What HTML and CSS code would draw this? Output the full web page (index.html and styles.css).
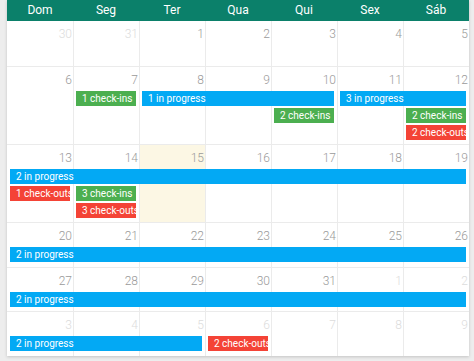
FILE: index.html
```html
<!DOCTYPE html>
<html lang="pt">
<head>
<meta charset="utf-8">
<title>Calendário</title>
<link rel="stylesheet" href="styles.css">
</head>
<body>
<div class="cal">
  <div class="head">
    <div>Dom</div><div>Seg</div><div>Ter</div><div>Qua</div><div>Qui</div><div>Sex</div><div>Sáb</div>
  </div>

  <div class="week first ev0">
    <div class="day other">30</div><div class="day other">31</div><div class="day">1</div><div class="day">2</div><div class="day">3</div><div class="day">4</div><div class="day">5</div>
  </div>

  <div class="week ev3">
    <div class="day">6</div><div class="day">7</div><div class="day">8</div><div class="day">9</div><div class="day">10</div><div class="day">11</div><div class="day">12</div>
    <div class="ev green r2 c2">1 check-ins</div>
    <div class="ev blue r2 c3 s3">1 in progress</div>
    <div class="ev blue r2 c6 s2">3 in progress</div>
    <div class="ev green r3 c5">2 check-ins</div>
    <div class="ev green r3 c7">2 check-ins</div>
    <div class="ev red r4 c7">2 check-outs</div>
  </div>

  <div class="week ev3">
    <div class="day">13</div><div class="day">14</div><div class="day today">15</div><div class="day">16</div><div class="day">17</div><div class="day">18</div><div class="day">19</div>
    <div class="ev blue r2 c1 s7">2 in progress</div>
    <div class="ev red r3 c1">1 check-outs</div>
    <div class="ev green r3 c2">3 check-ins</div>
    <div class="ev red r4 c2">3 check-outs</div>
  </div>

  <div class="week ev1">
    <div class="day">20</div><div class="day">21</div><div class="day">22</div><div class="day">23</div><div class="day">24</div><div class="day">25</div><div class="day">26</div>
    <div class="ev blue r2 c1 s7">2 in progress</div>
  </div>

  <div class="week ev1 short">
    <div class="day">27</div><div class="day">28</div><div class="day">29</div><div class="day">30</div><div class="day">31</div><div class="day other">1</div><div class="day other">2</div>
    <div class="ev blue r2 c1 s7">2 in progress</div>
  </div>

  <div class="week ev1">
    <div class="day other">3</div><div class="day other">4</div><div class="day other">5</div><div class="day other">6</div><div class="day other">7</div><div class="day other">8</div><div class="day other">9</div>
    <div class="ev blue r2 c1 s3">2 in progress</div>
    <div class="ev red r2 c4">2 check-outs</div>
  </div>
</div>
</body>
</html>
```
FILE: styles.css
```css
html, body {
  margin: 0;
  padding: 0;
}
body {
  background: #ededed;
  font-family: Roboto, "Liberation Sans", sans-serif;
  width: 474px;
  height: 361px;
  overflow: hidden;
}
.cal {
  margin-left: 7px;
  width: 462px;
  background: #fff;
  box-shadow: 0 1px 3px rgba(0, 0, 0, 0.18);
}
.head {
  display: grid;
  grid-template-columns: repeat(7, 66px);
  height: 21px;
  background: #0b806a;
  color: #fff;
  font-size: 12px;
  line-height: 21px;
  text-align: center;
}
.week {
  display: grid;
  grid-template-columns: repeat(7, 66px);
  box-sizing: border-box;
  min-height: 45px;
  border-top: 1px solid #ebebeb;
}
.week.first {
  border-top: none;
}
.ev0 { grid-template-rows: 1fr; }
.ev1 { grid-template-rows: 24px 17px 1fr; }
.ev3 { grid-template-rows: 24px 17px 17px 17px 1fr; min-height: 78px; }
.week.short { min-height: 44px; }

.day {
  grid-row: 1 / -1;
  box-sizing: border-box;
  border-left: 1px solid #ebebeb;
  padding: 6px 1px 0 0;
  text-align: right;
  font-size: 12px;
  line-height: 14px;
  font-weight: 300;
  color: #9a9a9a;
}
.day:nth-child(1) { grid-column: 1; border-left: none; }
.day:nth-child(2) { grid-column: 2; }
.day:nth-child(3) { grid-column: 3; }
.day:nth-child(4) { grid-column: 4; }
.day:nth-child(5) { grid-column: 5; }
.day:nth-child(6) { grid-column: 6; }
.day:nth-child(7) { grid-column: 7; }
.day.other { color: #dcdcdc; }
.day.today { background: #fcf7e4; }

.ev {
  align-self: start;
  height: 15px;
  margin: 0 3px;
  padding-left: 6px;
  color: #fff;
  font-size: 10px;
  line-height: 15px;
  white-space: nowrap;
  overflow: hidden;
}
.green { background: #4caf50; }
.blue { background: #03a9f4; }
.red { background: #f44336; }

.r2 { grid-row: 2; }
.r3 { grid-row: 3; }
.r4 { grid-row: 4; }
.c1 { grid-column-start: 1; }
.c2 { grid-column-start: 2; }
.c3 { grid-column-start: 3; }
.c4 { grid-column-start: 4; }
.c5 { grid-column-start: 5; }
.c6 { grid-column-start: 6; }
.c7 { grid-column-start: 7; }
.s2 { grid-column-end: span 2; }
.s3 { grid-column-end: span 3; }
.s7 { grid-column-end: span 7; }
```
